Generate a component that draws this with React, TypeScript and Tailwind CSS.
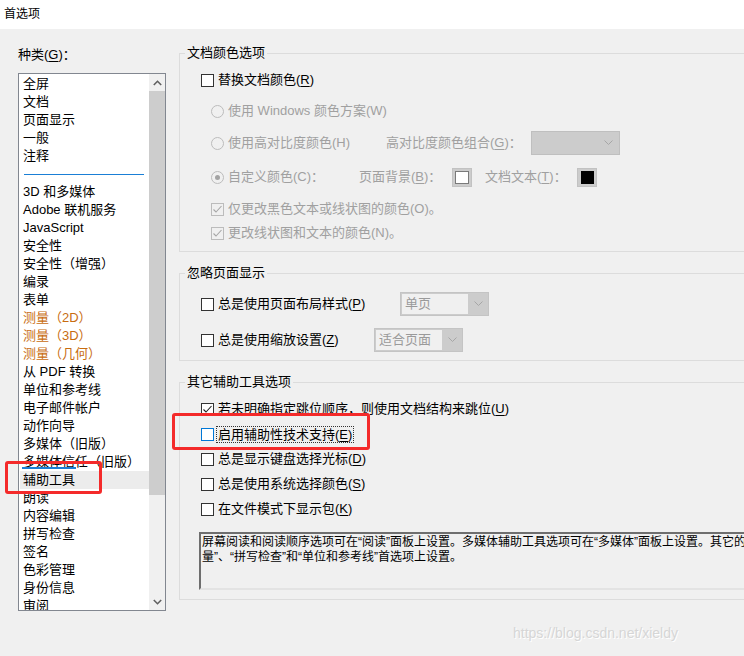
import React from 'react';

const U = ({ c }: { c: string }) => <span className="underline underline-offset-2 decoration-1">{c}</span>;

function Box({ checked, disabled, focus }: { checked?: boolean; disabled?: boolean; focus?: boolean }) {
  const cls = focus
    ? 'border-[#0078d7] bg-white'
    : disabled
    ? 'border-[#bcbcbc] bg-[#f0f0f0]'
    : 'border-[#333333] bg-white';
  return (
    <span className={`relative flex w-[13px] h-[13px] shrink-0 border ${cls}`}>
      {checked && (
        <svg className="absolute left-0 top-0" width="11" height="11" viewBox="0 0 11 11">
          <path d="M1.5 5.5 L4 8 L9.5 2" stroke={disabled ? '#a6a6a6' : '#222222'} strokeWidth="1.1" fill="none" />
        </svg>
      )}
    </span>
  );
}

function Radio({ checked }: { checked?: boolean }) {
  return (
    <span className="flex w-[13px] h-[13px] shrink-0 rounded-full border border-[#bcbcbc] bg-[#f0f0f0] items-center justify-center">
      {checked && <span className="w-[5px] h-[5px] rounded-full bg-[#a3a3a3]" />}
    </span>
  );
}

function Chevron({ color = '#a6a6a6' }: { color?: string }) {
  return (
    <svg width="9" height="6" viewBox="0 0 9 6">
      <path d="M0.5 0.5 L4.5 4.5 L8.5 0.5" stroke={color} strokeWidth="1" fill="none" />
    </svg>
  );
}

function Combo({ text }: { text?: string }) {
  if (!text) {
    return (
      <div className="w-[89px] h-[24px] bg-[#cccccc] border border-[#bfbfbf] flex items-center justify-end pr-[6px]">
        <Chevron />
      </div>
    );
  }
  return (
    <div className="w-[89px] h-[24px] bg-[#cccccc] border border-[#c4c4c4] flex items-center">
      <div className="ml-[1px] w-[66px] h-[20px] bg-[#f0f0f0] pl-[3px] text-[#9a9a9a] leading-[20px]">{text}</div>
      <div className="flex-1 flex justify-center">
        <Chevron />
      </div>
    </div>
  );
}

function Swatch({ black }: { black?: boolean }) {
  return (
    <span className="flex w-[20px] h-[19px] bg-[#cccccc] border border-[#c2c2c2] items-center justify-center shrink-0">
      {black ? (
        <span className="w-[13px] h-[13px] bg-black" />
      ) : (
        <span className="w-[14px] h-[13px] bg-white border border-[#7a7a7a]" />
      )}
    </span>
  );
}

const items: { t: string; orange?: boolean; sep?: boolean; sel?: boolean }[] = [
  { t: '全屏' },
  { t: '文档' },
  { t: '页面显示' },
  { t: '一般' },
  { t: '注释' },
  { t: '', sep: true },
  { t: '3D 和多媒体' },
  { t: 'Adobe 联机服务' },
  { t: 'JavaScript' },
  { t: '安全性' },
  { t: '安全性（增强）' },
  { t: '编录' },
  { t: '表单' },
  { t: '测量（2D）', orange: true },
  { t: '测量（3D）', orange: true },
  { t: '测量（几何）', orange: true },
  { t: '从 PDF 转换' },
  { t: '单位和参考线' },
  { t: '电子邮件帐户' },
  { t: '动作向导' },
  { t: '多媒体（旧版）' },
  { t: '多媒体信任（旧版）' },
  { t: '辅助工具', sel: true },
  { t: '朗读' },
  { t: '内容编辑' },
  { t: '拼写检查' },
  { t: '签名' },
  { t: '色彩管理' },
  { t: '身份信息' },
  { t: '审阅' },
];

export default function App() {
  return (
    <div className="relative w-[744px] h-[656px] overflow-hidden bg-[#f0f0f0] text-black font-['Liberation_Sans','Noto_Sans_CJK_SC',sans-serif] text-[13px] leading-[18px]">
      <div className="h-[29px] bg-white pl-[4px] text-[12px] leading-[28px]">首选项</div>

      <div className="flex">
        {/* left column */}
        <div className="w-[179px] shrink-0 pl-[18px] pt-[17px]">
          <div className="h-[18px]">
            种类(<U c="G" />)：
          </div>
          <div className="mt-[9px] w-[148px] h-[538px] border border-[#828790] bg-white flex overflow-hidden">
            <div className="w-[130px] shrink-0 overflow-hidden pt-[1px]">
              {items.map((it, i) =>
                it.sep ? (
                  <div key={i} className="h-[18px] flex items-center">
                    <div className="ml-[5px] w-[120px] h-[1px] bg-[#1a7fd6]" />
                  </div>
                ) : (
                  <div
                    key={i}
                    className={`h-[18px] ml-[1px] pl-[3px] whitespace-nowrap ${it.sel ? 'bg-[#ececec]' : ''} ${
                      it.orange ? 'text-[#c86c10]' : 'text-black'
                    }`}
                  >
                    {it.t}
                  </div>
                )
              )}
            </div>
            <div className="w-[16px] shrink-0 bg-[#f0f0f0] flex flex-col">
              <div className="h-[17px] flex items-center justify-center">
                <svg width="9" height="6" viewBox="0 0 9 6">
                  <path d="M0.8 5 L4.5 1.3 L8.2 5" stroke="#606060" strokeWidth="1.6" fill="none" />
                </svg>
              </div>
              <div className="h-[404px] bg-[#cdcdcd]" />
              <div className="flex-1" />
              <div className="h-[17px] flex items-center justify-center">
                <svg width="9" height="6" viewBox="0 0 9 6">
                  <path d="M0.8 1 L4.5 4.7 L8.2 1" stroke="#606060" strokeWidth="1.6" fill="none" />
                </svg>
              </div>
            </div>
          </div>
        </div>

        {/* right column */}
        <div className="flex-1 overflow-hidden pt-[15px]">
          {/* group 1 */}
          <fieldset className="w-[600px] min-w-0 m-0 p-0 border border-[#dcdcdc]">
            <legend className="ml-[5px] px-[2px] leading-[18px]">文档颜色选项</legend>
            <div className="pl-[21px] pb-[9px]">
              <div className="mt-[9px] h-[18px] flex items-center">
                <Box />
                <span className="ml-[4px]">
                  替换文档颜色(<U c="R" />)
                </span>
              </div>
              <div className="mt-[13px] h-[18px] ml-[10px] flex items-center text-[#a0a0a0]">
                <Radio />
                <span className="ml-[4px]">使用 Windows 颜色方案(W)</span>
              </div>
              <div className="mt-[11px] h-[24px] ml-[10px] flex items-center text-[#a0a0a0]">
                <div className="w-[175px] flex items-center">
                  <Radio />
                  <span className="ml-[4px]">使用高对比度颜色(H)</span>
                </div>
                <div className="w-[145px]">
                  高对比度颜色组合(<U c="G" />)：
                </div>
                <Combo />
              </div>
              <div className="mt-[12px] h-[20px] ml-[10px] flex items-center text-[#a0a0a0]">
                <div className="w-[148px] flex items-center">
                  <Radio checked />
                  <span className="ml-[4px]">自定义颜色(C)：</span>
                </div>
                <div className="w-[93px]">
                  页面背景(<U c="B" />)：
                </div>
                <Swatch />
                <div className="ml-[13px] w-[92px]">
                  文档文本(<U c="T" />)：
                </div>
                <Swatch black />
              </div>
              <div className="mt-[13px] h-[18px] ml-[10px] flex items-center text-[#a0a0a0]">
                <Box checked disabled />
                <span className="ml-[4px]">仅更改黑色文本或线状图的颜色(O)。</span>
              </div>
              <div className="mt-[6px] h-[18px] ml-[10px] flex items-center text-[#a0a0a0]">
                <Box checked disabled />
                <span className="ml-[4px]">更改线状图和文本的颜色(N)。</span>
              </div>
            </div>
          </fieldset>

          {/* group 2 */}
          <fieldset className="mt-[12px] w-[600px] min-w-0 m-0 p-0 border border-[#dcdcdc]">
            <legend className="ml-[5px] px-[2px] leading-[18px]">忽略页面显示</legend>
            <div className="pl-[21px] pb-[8px]">
              <div className="mt-[10px] h-[24px] flex items-center">
                <div className="w-[199px] flex items-center">
                  <Box />
                  <span className="ml-[4px]">
                    总是使用页面布局样式(<U c="P" />)
                  </span>
                </div>
                <Combo text="单页" />
              </div>
              <div className="mt-[12px] h-[24px] flex items-center">
                <div className="w-[173px] flex items-center">
                  <Box />
                  <span className="ml-[4px]">
                    总是使用缩放设置(<U c="Z" />)
                  </span>
                </div>
                <Combo text="适合页面" />
              </div>
            </div>
          </fieldset>

          {/* group 3 */}
          <fieldset className="mt-[12px] w-[600px] min-w-0 m-0 p-0 border border-[#dcdcdc]">
            <legend className="ml-[5px] px-[2px] leading-[18px]">其它辅助工具选项</legend>
            <div className="pl-[21px] pb-[9px]">
              <div className="mt-[9px] h-[18px] flex items-center">
                <Box checked />
                <span className="ml-[4px]">
                  若未明确指定跳位顺序，则使用文档结构来跳位(<U c="U" />)
                </span>
              </div>
              <div className="mt-[7px] h-[18px] flex items-center">
                <Box focus />
                <span className="ml-[2px] px-[1px] h-[17px] leading-[15px] border border-dotted border-[#333333]">
                  启用辅助性技术支持(<U c="E" />)
                </span>
              </div>
              <div className="mt-[7px] h-[18px] flex items-center">
                <Box />
                <span className="ml-[4px]">
                  总是显示键盘选择光标(<U c="D" />)
                </span>
              </div>
              <div className="mt-[7px] h-[18px] flex items-center">
                <Box />
                <span className="ml-[4px]">
                  总是使用系统选择颜色(<U c="S" />)
                </span>
              </div>
              <div className="mt-[7px] h-[18px] flex items-center">
                <Box />
                <span className="ml-[4px]">
                  在文件模式下显示包(<U c="K" />)
                </span>
              </div>
              <div className="mt-[14px] ml-[-2px] w-[560px] h-[58px] border-2 border-t-[#6e6e6e] border-l-[#6e6e6e] border-b-[#e3e3e3] border-r-[#e3e3e3] bg-[#f0f0f0] pl-[1px] pt-[1px] text-[12px] leading-[15px] whitespace-nowrap overflow-hidden">
                <div>屏幕阅读和阅读顺序选项可在“阅读”面板上设置。多媒体辅助工具选项可在“多媒体”面板上设置。其它的辅助工具选项可在“测</div>
                <div>量”、“拼写检查”和“单位和参考线”首选项上设置。</div>
              </div>
            </div>
          </fieldset>
        </div>
      </div>

      {/* annotations / overlays */}
      <div className="absolute left-[22px] top-[467px] w-[54px] h-[2px] bg-[#1a7fd6]" />
      <div className="absolute left-[5px] top-[461px] w-[97px] h-[33px] border-[3px] border-[#f42a2a] rounded-[3px]" />
      <div className="absolute left-[172px] top-[413px] w-[198px] h-[37px] border-[3px] border-[#f42a2a] rounded-[3px]" />
      <div className="absolute left-[513px] top-[624px] text-[14px] leading-[18px] font-['Liberation_Sans',sans-serif] text-[#d6d6d6] [text-shadow:1px_1px_0_#ffffff]">
        https://blog.csdn.net/xieldy
      </div>
    </div>
  );
}
